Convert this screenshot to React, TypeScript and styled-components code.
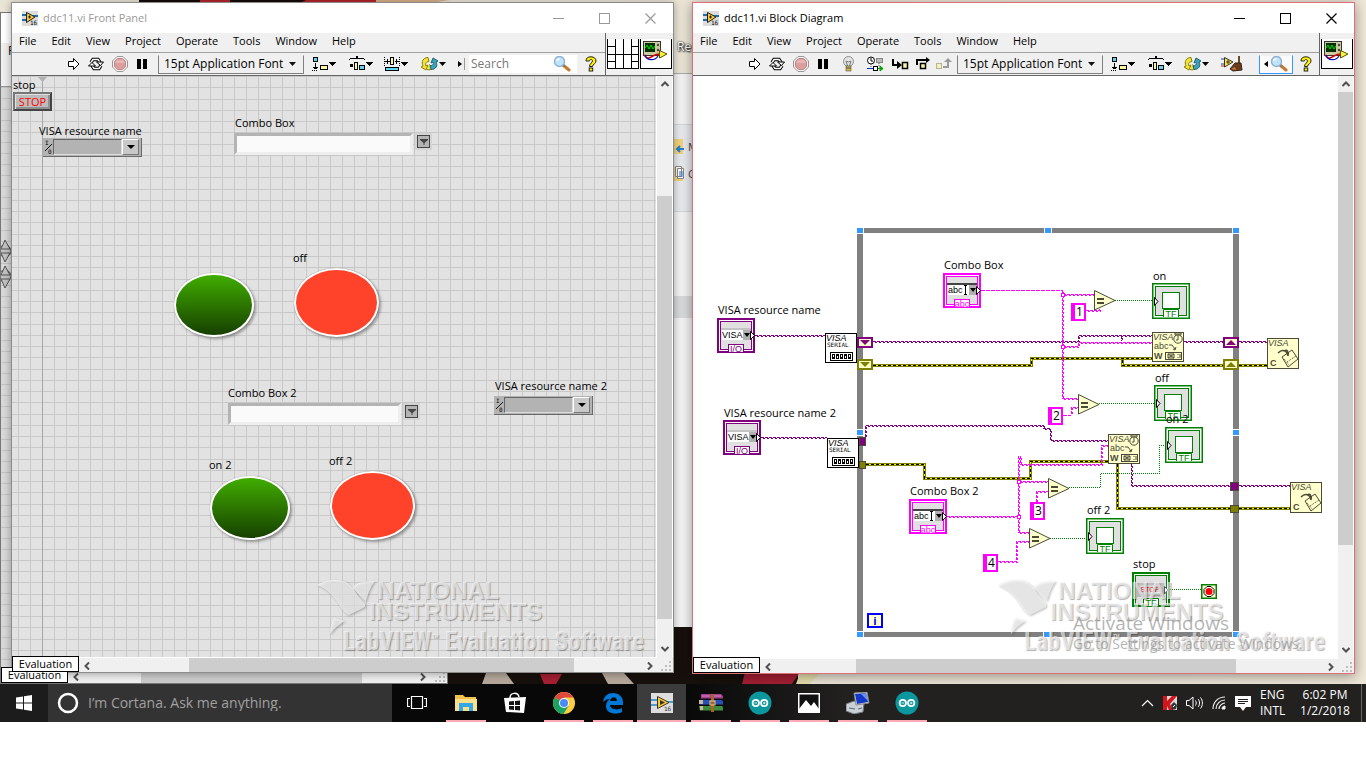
import React from "react";
import styled, { createGlobalStyle } from "styled-components";

const ui = `"Open Sans", "Noto Sans", sans-serif`;
const narrow = `"Liberation Sans Narrow", "Roboto Condensed", "DejaVu Sans Condensed", "Liberation Sans", sans-serif`;

const menus = ["File", "Edit", "View", "Project", "Operate", "Tools", "Window", "Help"];

/* ---------- toolbar icons ---------- */

const Caret = ({ x, y = 7 }: { x: number; y?: number }) => (
  <path d={`M${x} ${y}h7l-3.5 4z`} fill="#000" />
);

const RunIcon = () => (
  <svg width="14" height="14" viewBox="0 0 14 14">
    <path d="M1.500 4.500h5v-3l5.500 5.500-5.500 5.500v-3h-5z" fill="#fff" stroke="#000" />
  </svg>
);

const CycleIcon = () => (
  <svg width="16" height="14" viewBox="0 0 16 14">
    <g fill="none" stroke="#000" strokeWidth="3.4">
      <path d="M3 5.500 5 2.500h5l2 3" />
      <path d="M13 8.500 11 11.500H6l-2-3" />
    </g>
    <g fill="none" stroke="#fff" strokeWidth="1.4">
      <path d="M3 5.500 5 2.500h5l2 3" />
      <path d="M13 8.500 11 11.500H6l-2-3" />
    </g>
    <path d="M8.500 5h7l-3 3.500z" fill="#fff" stroke="#000" />
    <path d="M.5 9h7L4 5.500z" fill="#fff" stroke="#000" />
  </svg>
);

const AbortIcon = () => (
  <svg width="16" height="16" viewBox="0 0 16 16">
    <path d="M5 .5h6L15.500 5v6L11 15.500H5L.5 11V5z" fill="#f4f0f0" stroke="#999" />
    <path d="M5.500 2.500h5l3 3v5l-3 3h-5l-3-3v-5z" fill="#dd9d9d" stroke="#c08888" />
    <path d="M5 4h6l2 3H3z" fill="#e6b6b6" />
  </svg>
);

const PauseIcon = () => (
  <svg width="10" height="12" viewBox="0 0 10 12">
    <path d="M0 1h4v10H0zM6 1h4v10H6z" fill="#000" />
  </svg>
);

const AlignIcon = () => (
  <svg width="24" height="16" viewBox="0 0 24 16" shapeRendering="crispEdges">
    <rect x="1.500" y="1.500" width="4" height="4" fill="#5fd3ef" stroke="#000" />
    <path d="M3.500 7v4M1 11.500h5M2 12.500h3M0 14.500h1M2 14.500h1M4 14.500h1" stroke="#000" fill="none" />
    <rect x="8.500" y="9.500" width="7" height="4" fill="#fdf6a0" stroke="#000" />
    <Caret x={17} y={6} />
  </svg>
);

const DistributeIcon = () => (
  <svg width="24" height="16" viewBox="0 0 24 16" shapeRendering="crispEdges">
    <path d="M0 3.500 2 2.500h5L8 .5l1 2h5l2 1" fill="none" stroke="#000" />
    <rect x="1" y="8" width="3" height="3" fill="#000" />
    <rect x="5.500" y="6.500" width="3" height="7" fill="#fdf6a0" stroke="#000" />
    <rect x="10.500" y="9.500" width="5" height="4" fill="#5fd3ef" stroke="#000" />
    <Caret x={17} y={6} />
  </svg>
);

const ResizeIcon = () => (
  <svg width="24" height="16" viewBox="0 0 24 16" shapeRendering="crispEdges">
    <path d="M.5 1v9M15.500 1v9" stroke="#000" strokeDasharray="1 1" />
    <path d="M1 5.500h5M11 5.500h4M3.500 3v5M12.500 3v5" stroke="#000" />
    <rect x="6.500" y="1.500" width="3" height="7" fill="#fdf6a0" stroke="#000" />
    <rect x="1.500" y="11.500" width="13" height="3" fill="#5fd3ef" stroke="#000" />
    <Caret x={17} y={6} />
  </svg>
);

const ReorderIcon = () => (
  <svg width="26" height="16" viewBox="0 0 26 16">
    <path d="M7 1.500C2 1.500 0 6 2 10l-2 1 5 3 2-5-2 1c-1-3 0-4 3-4.500z" fill="#f1e33a" stroke="#8c7d00" />
    <path d="M6 13.500c3 1 5 0 5-3l-3-2" fill="#f1e33a" stroke="#8c7d00" />
    <path d="M10 13.500c5 0 7-4 5-7.500l2-1-5-3-2 5 2-1c1 2 0 3.500-3 4z" fill="#3aa5bd" stroke="#1c6273" />
    <Caret x={18} y={6} />
  </svg>
);

const BulbIcon = () => (
  <svg width="13" height="16" viewBox="0 0 13 16">
    <circle cx="6.500" cy="5.500" r="5" fill="#e4e4e4" stroke="#8f8f8f" />
    <path d="M4 5l1.500 5M9 5 7.500 10M4 5l2.500 1L9 5" stroke="#777" fill="none" />
    <rect x="4" y="10" width="5" height="5" fill="#d3b83d" stroke="#555" strokeWidth=".6" />
    <path d="M4 12h5" stroke="#555" />
  </svg>
);

const RetainIcon = () => (
  <svg width="17" height="16" viewBox="0 0 17 16">
    <circle cx="4" cy="4.500" r="3.500" fill="#fff" stroke="#000" />
    <path d="M4 2v3h2" fill="none" stroke="#000" />
    <rect x="9.500" y="2.500" width="6" height="4" fill="#bbb" stroke="#888" />
    <path d="M4 8v4M12 7v4" stroke="#555" strokeDasharray="1 1" />
    <path d="M0 12.500h7" stroke="#0033cc" />
    <rect x="6.500" y="10.500" width="4" height="4" fill="#fff" stroke="#000" />
    <path d="M11 12.500h5M13 10l3 2.500-3 2.500z" stroke="#00a000" fill="#00c000" />
  </svg>
);

const StepIntoIcon = () => (
  <svg width="17" height="14" viewBox="0 0 17 14">
    <path d="M1 2v6h6" fill="none" stroke="#000" strokeWidth="2" />
    <path d="M5 4l5 4-5 4z" fill="#000" />
    <rect x="10.500" y="5.500" width="5" height="6" fill="#fdf6a0" stroke="#000" strokeWidth="1.500" />
  </svg>
);

const StepOverIcon = () => (
  <svg width="15" height="14" viewBox="0 0 15 14">
    <path d="M1 8V3h10" fill="none" stroke="#000" strokeWidth="2" />
    <path d="M10 0l4 3-4 3z" fill="#000" />
    <rect x="4.500" y="6.500" width="5" height="5" fill="#fdf6a0" stroke="#000" strokeWidth="1.500" />
  </svg>
);

const StepOutIcon = () => (
  <svg width="17" height="14" viewBox="0 0 17 14">
    <rect x="1.500" y="6.500" width="5" height="5" fill="#f5f0c0" stroke="#b8b490" />
    <path d="M8 10h5V4" fill="none" stroke="#9a9a9a" strokeWidth="2" />
    <path d="M9 5l4-4 4 4z" fill="#9a9a9a" />
  </svg>
);

const CleanIcon = () => (
  <svg width="22" height="16" viewBox="0 0 22 16">
    <path d="M0 3h5M0 8h5" stroke="#1144cc" />
    <path d="M0 10h4" stroke="#cc2200" />
    <path d="M3.500 1.500 12 6l-8.500 5z" fill="#ffe23d" stroke="#333" />
    <path d="M5 6h4M7 4v4" stroke="#333" />
    <path d="M17 0h2v8h-2z" fill="#6b4a2a" />
    <path d="M14 7h6l1 7-9 1-3-2z" fill="#6b3a1d" stroke="#3b2413" />
    <path d="M10 13l4-2 1 3z" fill="#c7803a" />
  </svg>
);

const GlassIcon = () => (
  <svg width="18" height="16" viewBox="0 0 18 16">
    <path d="M10 9l6 5" stroke="#c77a2f" strokeWidth="3" strokeLinecap="round" />
    <path d="M9.500 8.500l2 2" stroke="#777" strokeWidth="2" />
    <circle cx="6.500" cy="5.500" r="5" fill="#bfe4fa" stroke="#8fb0d8" strokeWidth="1.400" />
    <path d="M3 5c0-2 2-3 4-2.500-1 1.500-2 2-4 2.500z" fill="#fff" />
  </svg>
);

const HelpIcon = () => (
  <svg width="12" height="16" viewBox="0 0 12 16">
    <path
      d="M1 5C1 2 3 .8 6 .8S11 2.500 11 5c0 3-3.500 3-3.500 5.500H4.500C4.500 7 7.500 7 7.500 5c0-2-3-2-3 0z"
      fill="#fff200"
      stroke="#222"
    />
    <rect x="4.200" y="12" width="3.500" height="3" fill="#fff200" stroke="#222" />
  </svg>
);

const ViIcon = () => (
  <svg width="16" height="15" viewBox="0 0 16 15">
    <rect width="16" height="15" fill="#dcdcdc" />
    <path d="M0 4h5M0 9h5M10 5h6" stroke="#1a6fb5" strokeWidth="2" />
    <path d="M4.500 1.500 13 6l-8.500 5.500z" fill="#fdc82f" stroke="#222" />
    <path d="M6 6h3M7.500 4.500v3" stroke="#222" />
    <MicroText x="8" y="14">16</MicroText>
  </svg>
);

const PaneIcon = () => (
  <svg width="32" height="30" viewBox="0 0 32 30">
    <rect x=".5" y="-1" width="31" height="30.500" fill="#fff" stroke="#000" />
    <rect x="3.500" y="2.500" width="17" height="14" fill="#cfcba0" stroke="#333" />
    <rect x="5" y="4" width="10" height="9" fill="#003000" />
    <path d="M5 9l2-3 2 4 2-4 2 4 2-3" fill="none" stroke="#00e000" />
    <circle cx="18" cy="6" r="1.200" fill="#444" />
    <circle cx="18" cy="11" r="1.200" fill="#444" />
    <path d="M3 16c3 0 2 4 6 3 4-1 5-4 11-4" fill="none" stroke="#e00000" strokeWidth="1.500" />
    <path d="M5 16c2 6 10 6 13 1" fill="none" stroke="#0010c0" strokeWidth="1.200" />
    <path d="M19.500 11.500 27 15l-7.500 4z" fill="#fff23d" stroke="#555500" />
  </svg>
);

const ConnectorIcon = () => (
  <svg width="32" height="30" viewBox="0 0 32 30" shapeRendering="crispEdges">
    <rect x=".5" y="-1" width="31" height="30.500" fill="#fff" stroke="#000" />
    <path d="M8.500 0v29M16.500 0v29M24.500 0v29M0 15.500h32M0 7.500h8M0 22.500h8M24 7.500h8M24 22.500h8" stroke="#000" />
  </svg>
);

/* ---------- window shell ---------- */

type Tool = { name: string; width: number; icon: React.ReactNode };

const runTools: Tool[] = [
  { name: "Run", width: 20, icon: <RunIcon /> },
  { name: "Run Continuously", width: 23, icon: <CycleIcon /> },
  { name: "Abort Execution", width: 26, icon: <AbortIcon /> },
  { name: "Pause", width: 18, icon: <PauseIcon /> },
];

const debugTools: Tool[] = [
  { name: "Highlight Execution", width: 33, icon: <BulbIcon /> },
  { name: "Retain Wire Values", width: 20, icon: <RetainIcon /> },
  { name: "Step Into", width: 30, icon: <StepIntoIcon /> },
  { name: "Step Over", width: 16, icon: <StepOverIcon /> },
  { name: "Step Out", width: 24, icon: <StepOutIcon /> },
];

const Tools = ({ items }: { items: Tool[] }) => (
  <>
    {items.map((t) => (
      <ToolButton key={t.name} $w={t.width} aria-label={t.name}>
        {t.icon}
      </ToolButton>
    ))}
  </>
);

const FontSelect = ({ gap }: { gap: number }) => (
  <SelectBox $gap={gap}>
    <FontPicker aria-label="Text settings">
      <option>15pt Application Font</option>
    </FontPicker>
    <svg width="7" height="4" viewBox="0 0 7 4">
      <path d="M0 0h7L3.500 4z" fill="#111" />
    </svg>
  </SelectBox>
);

const Chevron = ({ d }: { d: string }) => (
  <svg width="10" height="10" viewBox="0 0 10 10">
    <path d={d} fill="none" stroke="#505050" strokeWidth="2" />
  </svg>
);

const Scroll = ({ vertical, parts }: { vertical?: boolean; parts: [number, number, number] }) => (
  <ScrollBar $v={vertical}>
    <ScrollButton aria-label={vertical ? "Scroll up" : "Scroll left"}>
      <Chevron d={vertical ? "M1.500 7 5 3.500 8.500 7" : "M7 1.500 3.500 5 7 8.500"} />
    </ScrollButton>
    <Grow $n={parts[0]} />
    <Thumb $n={parts[1]} />
    <Grow $n={parts[2]} />
    <ScrollButton aria-label={vertical ? "Scroll down" : "Scroll right"}>
      <Chevron d={vertical ? "M1.500 3 5 6.500 8.500 3" : "M3 1.500 6.500 5 3 8.500"} />
    </ScrollButton>
  </ScrollBar>
);

const Grip = () => (
  <svg width="10" height="10" viewBox="0 0 10 10">
    <path d="M8 0h2v2H8zM8 4h2v2H8zM8 8h2v2H8zM4 4h2v2H4zM4 8h2v2H4zM0 8h2v2H0z" fill="#bdbdbd" />
  </svg>
);

type ShellProps = {
  title: string;
  active?: boolean;
  tools: React.ReactNode;
  pane: React.ReactNode;
  v: [number, number, number];
  h: [number, number, number];
  children: React.ReactNode;
};

const Shell = ({ title, active, tools, pane, v, h, children }: ShellProps) => (
  <>
    <TitleBar $active={active}>
      <ViIcon />
      <h1>{title}</h1>
      <WindowButton aria-label="Minimize">
        <svg width="11" height="11" viewBox="0 0 11 11">
          <path d="M0 5.500h11" stroke="currentColor" />
        </svg>
      </WindowButton>
      <WindowButton aria-label="Maximize">
        <svg width="11" height="11" viewBox="0 0 11 11">
          <rect x=".5" y=".5" width="10" height="10" fill="none" stroke="currentColor" />
        </svg>
      </WindowButton>
      <WindowButton aria-label="Close">
        <svg width="11" height="11" viewBox="0 0 11 11">
          <path d="M.5.5l10 10M10.500.5l-10 10" stroke="currentColor" strokeWidth="1.200" />
        </svg>
      </WindowButton>
    </TitleBar>
    <Header>
      <Bars>
        <MenuBar>
          {menus.map((m) => (
            <MenuItem key={m}>{m}</MenuItem>
          ))}
        </MenuBar>
        <Toolbar>{tools}</Toolbar>
      </Bars>
      <Pane>{pane}</Pane>
    </Header>
    <Middle>
      {children}
      <Scroll vertical parts={v} />
    </Middle>
    <Footer>
      <Tab>Evaluation</Tab>
      <Scroll parts={h} />
      <Corner>
        <Grip />
      </Corner>
    </Footer>
  </>
);

const NiMark = ({ x }: { x: number }) => (
  <Watermark $x={x}>
    <svg width="60" height="56" viewBox="0 0 60 56">
      <path
        d="M0 5c6-4 14-6 22-5 7 1 12 5 15 10 3 5 6 9 11 14v3l-16 8c-6-3-9-9-13-15C14 13 8 8 0 5zM35 8c4-5 9-7 23-7-4 5-6 10-9 20-5-4-8-8-14-13zM17 38l11 3c-4 2-9 6-15 13 0-6 1-11 4-16z"
        fill="currentColor"
      />
    </svg>
    <MarkLines>
      <MarkText $indent>NATIONAL</MarkText>
      <MarkText>INSTRUMENTS</MarkText>
    </MarkLines>
    <MarkProduct>
      LabVIEW<small>™</small> Evaluation Software
    </MarkProduct>
  </Watermark>
);

/* ---------- front panel ---------- */

type FieldProps = { id: string; label: string; x: number; y: number; lx: number; ly: number };

const Visa = ({ id, label, x, y, lx, ly }: FieldProps) => (
  <>
    <At $x={lx} $y={ly}>
      <label htmlFor={id}>{label}</label>
    </At>
    <At $x={x} $y={y}>
      <VisaBox>
        <svg width="9" height="16" viewBox="0 0 9 16">
          <MicroText x="1" y="6">I</MicroText>
          <path d="M1 12l7-7" stroke="#111" />
          <MicroText x="4" y="15">0</MicroText>
        </svg>
        <VisaSelect id={id} />
        <VisaArrow>
          <svg width="8" height="4" viewBox="0 0 8 4">
            <path d="M0 0h8L4 4z" />
          </svg>
        </VisaArrow>
      </VisaBox>
    </At>
  </>
);

const Combo = ({ id, label, x, y, lx, ly, width }: FieldProps & { width: number }) => (
  <>
    <At $x={lx} $y={ly}>
      <label htmlFor={id}>{label}</label>
    </At>
    <At $x={x} $y={y}>
      <ComboRow>
        <ComboInput id={id} $w={width} />
        <ComboButton aria-label={`${label} list`}>
          <svg width="8" height="6" viewBox="0 0 8 6">
            <path d="M0 0h8v1L4.500 4v2h-1V4L0 1z" fill="#444" />
          </svg>
        </ComboButton>
      </ComboRow>
    </At>
  </>
);

const FrontPanel = () => (
  <FrontWindow>
    <Shell
      title="ddc11.vi Front Panel"
      tools={
        <>
          <Tools items={runTools} />
          <FontSelect gap={7} />
          <Tools
            items={[
              { name: "Align Objects", width: 40, icon: <AlignIcon /> },
              { name: "Distribute Objects", width: 34, icon: <DistributeIcon /> },
              { name: "Resize Objects", width: 36, icon: <ResizeIcon /> },
              { name: "Reorder", width: 40, icon: <ReorderIcon /> },
            ]}
          />
          <Expander>
            <svg width="8" height="12" viewBox="0 0 8 12">
              <path d="M0 3v6l4-3z" />
              <path d="M6.500 0v12" stroke="#999" />
            </svg>
          </Expander>
          <SearchBox>
            <input aria-label="Search" placeholder="Search" />
            <GlassIcon />
          </SearchBox>
          <Tools items={[{ name: "Context Help", width: 28, icon: <HelpIcon /> }]} />
        </>
      }
      pane={
        <>
          <ConnectorIcon />
          <PaneIcon />
        </>
      }
      v={[104, 421, 22]}
      h={[94, 379, 67]}
    >
      <GridCanvas>
        <Layer $x={12} $y={76}>
          <At $x={38} $y={77}>
            <svg width="9" height="580" viewBox="0 0 9 580">
              <path d="M4.500 4v576" stroke="#a8a8a8" />
              <path d="M0 0h9L4.500 5z" fill="#b0b0b0" />
            </svg>
          </At>
          <At $x={13} $y={77}>stop</At>
          <At $x={13} $y={92}>
            <StopButton>STOP</StopButton>
          </At>
          <Visa id="visa1" label="VISA resource name" lx={39} ly={123} x={43} y={138} />
          <Combo id="combo1" label="Combo Box" lx={235} ly={115} x={234} y={133} width={179} />
          <At $x={174} $y={273}>
            <RoundButton $on aria-label="on" />
          </At>
          <At $x={293} $y={250}>off</At>
          <At $x={294} $y={268}>
            <RoundButton aria-label="off" />
          </At>
          <Combo id="combo2" label="Combo Box 2" lx={228} ly={385} x={228} y={403} width={173} />
          <Visa id="visa2" label="VISA resource name 2" lx={495} ly={378} x={494} y={396} />
          <At $x={209} $y={457}>on 2</At>
          <At $x={210} $y={476}>
            <RoundButton $on aria-label="on 2" />
          </At>
          <At $x={329} $y={453}>off 2</At>
          <At $x={330} $y={471}>
            <RoundButton aria-label="off 2" />
          </At>
          <NiMark x={317} />
        </Layer>
      </GridCanvas>
    </Shell>
  </FrontWindow>
);

/* ---------- block diagram ---------- */

const purple = "#800080";
const pink = "#ff00ff";
const green = "#008000";
const olive = "#808000";
const cream = "#ffffcc";
const ink = "#4a4a36";

// resource and string wires are drawn as two interleaved dash rows
const Zigzag = ({ d, color }: { d: string; color: string }) => (
  <>
    <path d={d} stroke={color} strokeDasharray="3 1" />
    <path d={d} stroke={color} strokeDasharray="2 2" strokeDashoffset="3" transform="translate(1 1)" />
  </>
);

const ErrorWire = ({ d }: { d: string }) => (
  <>
    <path d={d} stroke={olive} strokeWidth="3" />
    <path d={d} stroke="#f2f200" />
    <path d={d} stroke="#000" strokeDasharray="3 2" />
  </>
);

const resourceWires = [
  "M755 335.500H825",
  "M873 341.500H1078.500V335.500H1152",
  "M1121.500 336V341",
  "M1184 341.500H1223",
  "M1239 341.500H1267",
  "M761 437.500H827",
  "M865.500 437V425.500H1043.500V428.500H1050.500V440.500H1108",
  "M1131.500 464V485.500H1230",
  "M1239 485.500H1290",
];

const stringWires = [
  "M1062.500 290V398.500H1078",
  "M1063 294.500H1094",
  "M1086 310.500H1099.500V307",
  "M1063 346.500H1078.500V342.500H1152",
  "M1071.500 414V407.500H1078",
  "M947 516.500H1019",
  "M1018.500 456V532.500H1029",
  "M1020.500 456V464.500H1101.500V445.500H1108",
  "M1019 481.500H1048",
  "M1036.500 502V491.500H1048",
  "M998 561.500H1016.500V541.500H1029",
];

const errorWires = [
  "M873 365.500H1031.500V358.500H1152",
  "M1122.500 360V365.500H1223",
  "M1239 365.500H1267",
  "M866 464.500H924.500V478.500H1030.500V461.500H1108",
  "M1117.500 464V508.500H1230",
  "M1239 508.500H1290",
];

const boolWires = [
  "M1115 300.500H1152",
  "M1099 403.500H1154",
  "M1069 487.500H1100.500V473.500H1159.500V445.500H1165",
  "M1050 538.500H1086",
  "M1170 589.500H1201",
];

const handles = [
  [857, 228], [1045, 228], [1233, 228],
  [857, 430], [1233, 430],
  [857, 632], [1044, 632], [1233, 632],
];

const Wires = () => (
  <svg width="700" height="600" viewBox="693 76 700 600" fill="none" shapeRendering="crispEdges">
    <path d="M857 230.500H1239M857 634.500H1239" stroke="#808080" strokeWidth="5" />
    <path d="M860 228V637M1236 228V637" stroke="#808080" strokeWidth="6" />
    {handles.map(([x, y]) => (
      <g key={`${x}-${y}`}>
        <rect x={x - 1} y={y - 1} width="8" height="7" fill="#fff" />
        <rect x={x} y={y} width="6" height="5" fill="#3399ff" />
      </g>
    ))}
    {errorWires.map((d) => <ErrorWire key={d} d={d} />)}
    {resourceWires.map((d) => <Zigzag key={d} d={d} color={purple} />)}
    {stringWires.map((d) => <Zigzag key={d} d={d} color={pink} />)}
    <path d="M981 290.500H1063M1063 415.500H1071" stroke={pink} strokeDasharray="4 1" />
    {boolWires.map((d) => <path key={d} d={d} stroke={green} strokeDasharray="1 1" />)}
    {[[1063, 295], [1063, 347], [1019, 482], [1019, 517]].map(([x, y]) => (
      <circle key={`${x}-${y}`} cx={x} cy={y} r="2" stroke={pink} fill="#fff" />
    ))}
    <rect x="859.500" y="437.500" width="6" height="8" fill={purple} stroke={ink} />
    <rect x="859.500" y="461.500" width="6" height="7" fill={olive} stroke={ink} />
    <rect x="1230.500" y="482.500" width="8" height="8" fill={purple} stroke={ink} />
    <rect x="1230.500" y="505.500" width="8" height="7" fill={olive} stroke={ink} />
  </svg>
);

const ShiftRegister = ({ color, up }: { color: string; up?: boolean }) => (
  <svg width="16" height="11" viewBox="0 0 16 11">
    <rect x="1" y="1" width="14" height="9" fill={cream} stroke={color} strokeWidth="2" />
    <path d={up ? "M3 8h10L8 3z" : "M3 3h10L8 8z"} fill={color} />
  </svg>
);

const ControlTerminal = ({ kind }: { kind: "VISA" | "abc" }) => {
  const color = kind === "VISA" ? purple : pink;
  return (
    <svg width="38" height="35" viewBox="0 0 38 35">
      <rect x="1" y="1" width="36" height="33" fill="#fff" stroke={color} strokeWidth="2" />
      <rect x="3.500" y="3.500" width="31" height="28" fill="#e0e0e0" stroke={color} />
      <rect x="4" y="10" width="30" height="2" fill={kind === "VISA" ? "#c4c4c4" : "#444"} />
      <rect x="5" y="12" width="28" height="10" fill="#fff" />
      <rect x="26" y="12" width="8" height="10" fill="#b0b0b0" />
      <path d="M27 15h6l-3 4z" fill="#000" />
      <path d="M33.500 13.500 37.500 17.500l-4 4z" fill="#fff" stroke="#000" />
      <TinyText x="5" y="20">{kind}</TinyText>
      {kind === "abc" && <path d="M21 12.500h3M22.500 13v8M21 21.500h3" stroke="#000" />}
      <rect x="11.500" y="26.500" width="15" height="8" fill="#fff" stroke={color} />
      <TinyText x="19" y="34" textAnchor="middle" fill={color}>
        {kind === "VISA" ? "I/O" : "abc"}
      </TinyText>
    </svg>
  );
};

const BoolTerminal = () => (
  <svg width="38" height="36" viewBox="0 0 38 36">
    <rect x=".75" y=".75" width="36.500" height="34.500" fill="#fff" stroke={green} strokeWidth="1.500" />
    <rect x="3.500" y="3.500" width="31" height="29" fill="#e0e0e0" stroke={green} />
    <rect x="10.500" y="9.500" width="17" height="16" fill="#fff" stroke={green} />
    <path d="M2.500 14.500 6 18.500l-3.500 4z" fill="#fff" stroke="#000" />
    <path d="M11.500 34v-7.500h15V34" fill="#fff" stroke={green} />
    <TinyText x="19" y="34" textAnchor="middle" fill={green}>TF</TinyText>
  </svg>
);

const StopTerminal = () => (
  <svg width="38" height="35" viewBox="0 0 38 35">
    <rect x="1" y="1" width="36" height="33" fill="#fff" stroke={green} strokeWidth="2" />
    <rect x="3.500" y="3.500" width="31" height="30" fill="#e0e0e0" stroke={green} />
    <rect x="5" y="11" width="27" height="14" fill="#bdbdbd" />
    <rect x="7" y="13" width="23" height="9" fill="#d4d4d4" />
    <StopText x="18" y="20" textAnchor="middle">STOP</StopText>
    <path d="M32.500 14.500 36 18l-3.500 4z" fill="#fff" stroke="#555" />
    <path d="M11.500 34v-7.500h15V34" fill="#fff" stroke={green} />
    <TinyText x="19" y="34" textAnchor="middle" fill={green}>TF</TinyText>
  </svg>
);

const StopCondition = () => (
  <svg width="16" height="15" viewBox="0 0 16 15">
    <rect x=".75" y=".75" width="14.500" height="13.500" fill={cream} stroke={green} strokeWidth="1.500" />
    <path d="M6 2.500h4l3 3v4l-3 3H6l-3-3v-4z" fill="#fff" stroke="#000" />
    <circle cx="8" cy="7.500" r="3.500" fill="#f00" />
  </svg>
);

const EqualNode = () => (
  <svg width="22" height="21" viewBox="0 0 22 21">
    <path d="M.5.5 21 10.500.5 20z" fill={cream} stroke={ink} />
    <path d="M3 9h7M3 13h7" stroke={ink} strokeWidth="2" />
  </svg>
);

const SerialNode = () => (
  <svg width="32" height="30" viewBox="0 0 32 30">
    <rect x=".5" y=".5" width="31" height="29" fill="#fff" stroke="#000" />
    <SlantText x="1" y="8">VISA</SlantText>
    <MicroText x="2" y="14">SERIAL</MicroText>
    <rect x="5.500" y="19.500" width="22" height="8" fill="#fff" stroke="#000" />
    <path d="M7 21h3v5H7zM11 21h3v5h-3zM15 21h3v5h-3zM19 21h3v5h-3zM23 21h3v5h-3z" fill="#000" />
    <path d="M8 22h1v2H8zM12 23h1v2h-1zM16 22h1v2h-1zM20 23h1v2h-1zM24 22h1v2h-1z" fill="#fff" />
  </svg>
);

const WriteNode = () => (
  <svg width="32" height="30" viewBox="0 0 32 30">
    <rect x=".5" y=".5" width="31" height="29" fill={cream} stroke={ink} />
    <SlantText x="1" y="8" fill={ink}>VISA</SlantText>
    <TinyText x="2" y="17" fill={ink}>abc</TinyText>
    <path d="M17 13h3l3 4M21 17l2 1 1-3" fill="none" stroke={ink} />
    <circle cx="26" cy="7" r="4.200" fill={cream} stroke={ink} />
    <path d="M26 4v4h-2M23 1h6v2h-6z" fill="none" stroke={ink} />
    <TinyText x="2" y="27" fontWeight="bold" fill={ink}>W</TinyText>
    <rect x="13.500" y="20.500" width="16" height="7" fill={cream} stroke={ink} />
    <path d="M16 22h6v4h-6zM16 22l6 4M22 22l-6 4M26 22v1M26 25v1M28 22v4" fill="none" stroke={ink} />
  </svg>
);

const CloseNode = () => (
  <svg width="32" height="31" viewBox="0 0 32 31">
    <rect x=".5" y=".5" width="31" height="30" fill={cream} stroke={ink} />
    <SlantText x="1" y="8" fill={ink}>VISA</SlantText>
    <TinyText x="3" y="28" fontWeight="bold" fill={ink}>C</TinyText>
    <path d="M15 19l10-7 6 9-10 8z" fill={cream} stroke={ink} />
    <path d="M11 15c4-4 9-3 10 3M17 13c3-2 5 0 4 5" fill="none" stroke={ink} strokeWidth="1.500" />
    <path d="M17 21l5 6M20 24l9-6" stroke={ink} strokeDasharray="1 1" />
  </svg>
);

const nodes: { x: number; y: number; node: React.ReactNode }[] = [
  { x: 943, y: 273, node: <ControlTerminal kind="abc" /> },
  { x: 717, y: 318, node: <ControlTerminal kind="VISA" /> },
  { x: 723, y: 420, node: <ControlTerminal kind="VISA" /> },
  { x: 909, y: 499, node: <ControlTerminal kind="abc" /> },
  { x: 825, y: 333, node: <SerialNode /> },
  { x: 827, y: 438, node: <SerialNode /> },
  { x: 857, y: 337, node: <ShiftRegister color={purple} /> },
  { x: 857, y: 359, node: <ShiftRegister color={olive} /> },
  { x: 1223, y: 337, node: <ShiftRegister color={purple} up /> },
  { x: 1223, y: 359, node: <ShiftRegister color={olive} up /> },
  { x: 1094, y: 290, node: <EqualNode /> },
  { x: 1078, y: 394, node: <EqualNode /> },
  { x: 1048, y: 478, node: <EqualNode /> },
  { x: 1029, y: 528, node: <EqualNode /> },
  { x: 1152, y: 332, node: <WriteNode /> },
  { x: 1108, y: 434, node: <WriteNode /> },
  { x: 1267, y: 338, node: <CloseNode /> },
  { x: 1290, y: 482, node: <CloseNode /> },
  { x: 1152, y: 283, node: <BoolTerminal /> },
  { x: 1154, y: 385, node: <BoolTerminal /> },
  { x: 1165, y: 427, node: <BoolTerminal /> },
  { x: 1086, y: 518, node: <BoolTerminal /> },
  { x: 1132, y: 572, node: <StopTerminal /> },
  { x: 1201, y: 584, node: <StopCondition /> },
  { x: 1071, y: 303, node: "1" },
  { x: 1048, y: 407, node: "2" },
  { x: 1030, y: 502, node: "3" },
  { x: 983, y: 554, node: "4" },
];

const captions = [
  { x: 944, y: 257, text: "Combo Box" },
  { x: 718, y: 302, text: "VISA resource name" },
  { x: 724, y: 405, text: "VISA resource name 2" },
  { x: 910, y: 483, text: "Combo Box 2" },
  { x: 1153, y: 268, text: "on" },
  { x: 1155, y: 370, text: "off" },
  { x: 1166, y: 411, text: "on 2" },
  { x: 1087, y: 502, text: "off 2" },
  { x: 1133, y: 556, text: "stop" },
];

const BlockDiagram = () => (
  <BlockWindow>
    <Shell
      title="ddc11.vi Block Diagram"
      active
      tools={
        <>
          <Tools items={runTools} />
          <Tools items={debugTools} />
          <FontSelect gap={2} />
          <Tools
            items={[
              { name: "Align Objects", width: 40, icon: <AlignIcon /> },
              { name: "Distribute Objects", width: 34, icon: <DistributeIcon /> },
              { name: "Reorder", width: 40, icon: <ReorderIcon /> },
              { name: "Clean Up Diagram", width: 30, icon: <CleanIcon /> },
            ]}
          />
          <SearchButton aria-label="Search">
            <svg width="4" height="6" viewBox="0 0 4 6">
              <path d="M4 0v6L0 3z" />
            </svg>
            <GlassIcon />
          </SearchButton>
          <Tools items={[{ name: "Context Help", width: 26, icon: <HelpIcon /> }]} />
        </>
      }
      pane={<PaneIcon />}
      v={[0, 452, 97]}
      h={[80, 378, 86]}
    >
      <Canvas>
        <Layer $x={693} $y={76}>
          <At $x={693} $y={76}>
            <Wires />
          </At>
          {nodes.map(({ x, y, node }) => (
            <At key={`${x}-${y}`} $x={x} $y={y}>
              {typeof node === "string" ? <Constant>{node}</Constant> : node}
            </At>
          ))}
          <At $x={867} $y={613}>
            <Iteration>i</Iteration>
          </At>
          {captions.map((c) => (
            <At key={c.text} $x={c.x} $y={c.y}>{c.text}</At>
          ))}
          <NiMark x={998} />
          <At $x={1073} $y={611}>
            <Activate>
              <strong>Activate Windows</strong>
              <span>Go to Settings to activate Windows.</span>
            </Activate>
          </At>
        </Layer>
      </Canvas>
    </Shell>
  </BlockWindow>
);

/* ---------- desktop and taskbar ---------- */

const Wallpaper = () => (
  <Backdrop viewBox="0 0 1366 684" preserveAspectRatio="none">
    <defs>
      <linearGradient id="paper" x1="0" x2="1">
        <stop offset="0" stopColor="#e9e4d6" />
        <stop offset="1" stopColor="#efe7d8" />
      </linearGradient>
    </defs>
    <rect width="1366" height="684" fill="url(#paper)" />
    <rect x="139" width="250" height="300" fill="#140b0c" />
    <path d="M306 0h70l14 3h-90zM200 0h30v3h-30z" fill="#b3252c" />
    <path d="M376 0h74l-20 3h-54z" fill="#d8b088" />
    <path d="M440 600h358v84H440z" fill="#17100c" />
    <path d="M486 673h20l8 11h-32zM602 673h22l10 11h-26z" fill="#b5a79a" />
    <path d="M540 674h22l-6 10h-12zM745 672h55l-8 12h-50z" fill="#a41f33" />
    <path d="M800 673h20l-10 11h-14z" fill="#e8e0b0" />
  </Backdrop>
);

const ExplorerBehind = () => (
  <Explorer>
    <Ribbon>
      <div>
        <svg width="11" height="15" viewBox="0 0 11 15">
          <path d="M0 0h9v15H0z" fill="#f3d57d" />
          <path d="M10 10H4M6 7l-3 3 3 3" fill="none" stroke="#2581cc" strokeWidth="2" />
        </svg>
        M
      </div>
      <div>
        <svg width="11" height="15" viewBox="0 0 11 15">
          <path d="M0 1h9v14H0z" fill="#f3d57d" />
          <path d="M1.500.5h6v10h-6zM3.500 2.500h6v10h-6z" fill="#fff" stroke="#888" />
          <path d="M5 6h4M5 8h4M5 10h4" stroke="#3a78c8" />
        </svg>
        C
      </div>
    </Ribbon>
    <ExplorerRow />
  </Explorer>
);

const BackVi = () => (
  <BackWindow>
    <BackTitle />
    <BackMenu>F</BackMenu>
    <BackCanvas>
      <svg width="11" height="54" viewBox="0 0 11 54">
        <g fill="#c4c4c4" stroke="#555">
          <circle cx="4" cy="14" r="6" />
          <circle cx="4" cy="39" r="6" />
          <path d="M0 12l4-9 5 9zM0 16l4 9 5-9zM0 38l4-9 5 9zM0 42l4 9 5-9z" />
        </g>
      </svg>
    </BackCanvas>
    <Footer>
      <Tab>Evaluation</Tab>
      <Scroll parts={[57, 219, 54]} />
      <Corner>
        <Grip />
      </Corner>
    </Footer>
  </BackWindow>
);

const Arduino = () => (
  <svg width="24" height="24" viewBox="0 0 24 24">
    <circle cx="12" cy="12" r="11.500" fill="#0b979d" />
    <g fill="none" stroke="#fff" strokeWidth="1.700">
      <circle cx="7.800" cy="12" r="3.200" />
      <circle cx="16.200" cy="12" r="3.200" />
    </g>
    <path d="M6.500 12h2.500M15 12h2.500M16.200 10.800v2.400" stroke="#fff" strokeWidth=".8" />
  </svg>
);

const LabviewIcon = () => (
  <svg width="22" height="20" viewBox="0 0 22 20">
    <rect width="22" height="20" fill="#dedede" />
    <path d="M0 7h6M0 12h6M15 9h7" stroke="#4d9fd0" strokeWidth="2" />
    <path d="M6.500 3.500 18 9.500l-11.500 6z" fill="#fdc82f" stroke="#333" />
    <path d="M9 7l5 2.500L9 12z" fill="#333" />
    <MicroText x="13" y="18" fill="#333">16</MicroText>
  </svg>
);

const apps: { name: string; open?: boolean; active?: boolean; icon: React.ReactNode }[] = [
  {
    name: "Task View",
    icon: (
      <svg width="20" height="14" viewBox="0 0 20 14" fill="none" stroke="#fff">
        <path d="M4.500.5h11v12h-11zM3 2.500H.5v8H3M17 2.500h2.500v8H17" strokeWidth="1.200" />
      </svg>
    ),
  },
  {
    name: "File Explorer",
    open: true,
    icon: (
      <svg width="22" height="18" viewBox="0 0 22 18">
        <path d="M0 1h8l2 2h11v14H0z" fill="#f0c24b" />
        <path d="M0 5h22v12H0z" fill="#fbe08c" />
        <path d="M4 17V9h14v8h-4v-4H8v4z" fill="#35a7e8" />
      </svg>
    ),
  },
  {
    name: "Store",
    icon: (
      <svg width="22" height="22" viewBox="0 0 22 22">
        <path d="M6 6c0-6 8-6 9-1" fill="none" stroke="#fff" strokeWidth="1.500" />
        <path d="M0 6l22-1-2 16-18-1z" fill="#fff" />
        <path d="M5 9.500l5-.5v4H5zM11 9l5-.5V13h-5zM5 14h5v4l-5-.5zM11 14h5v4.500l-5-.5z" fill="#111" />
      </svg>
    ),
  },
  {
    name: "Chrome",
    open: true,
    icon: (
      <svg width="22" height="22" viewBox="0 0 22 22">
        <circle cx="11" cy="11" r="11" fill="#ffcd40" />
        <path d="M11 11 1.500 5.500A11 11 0 0 1 20.500 5.500H11z" fill="#dd4b3e" />
        <path d="M11 11 1.500 5.500A11 11 0 0 0 10.500 22l5-8z" fill="#1aa260" />
        <circle cx="11" cy="11" r="5" fill="#fff" />
        <circle cx="11" cy="11" r="4" fill="#4a8af4" />
      </svg>
    ),
  },
  {
    name: "Edge",
    open: true,
    icon: (
      <svg width="22" height="22" viewBox="0 0 22 22">
        <path
          d="M1 10C2 4 6 1 11 1c6 0 10 4 10 9v3H8c0 4 7 6 12 3v4c-6 3-16 2-16-6 0-3 1-5 4-7-3 0-5 1-7 3zm7-1h7c0-5-6-5-7 0z"
          fill="#0078d7"
        />
      </svg>
    ),
  },
  { name: "LabVIEW", open: true, active: true, icon: <LabviewIcon /> },
  {
    name: "WinRAR",
    open: true,
    icon: (
      <svg width="24" height="18" viewBox="0 0 24 18">
        <path d="M2 0h20l2 2v3H2z" fill="#a03f8e" />
        <path d="M0 6h22l2 1v4H1z" fill="#2a4fb8" />
        <path d="M0 12h23l1 1v4H1z" fill="#3c8d3c" />
        <path d="M3 2h8M15 2h7" stroke="#d98ac8" />
        <path d="M0 5h24M0 11h24M0 17h24" stroke="#111" />
        <path d="M0 6h4v4H0zM1 12h3v4H1z" fill="#c9b9a0" />
        <path d="M12 0h3v18h-3z" fill="#a8632a" />
        <rect x="11" y="7" width="5" height="4" fill="none" stroke="#f0d070" />
      </svg>
    ),
  },
  { name: "Arduino", open: true, icon: <Arduino /> },
  {
    name: "Photos",
    open: true,
    icon: (
      <svg width="22" height="20" viewBox="0 0 22 20">
        <rect x=".75" y=".75" width="20.500" height="18.500" fill="#111" stroke="#fff" strokeWidth="1.500" />
        <path d="M1 16l7-9 5 6 3-4 5 7v3H1z" fill="#fff" />
      </svg>
    ),
  },
  {
    name: "Device Manager",
    open: true,
    icon: (
      <svg width="24" height="22" viewBox="0 0 24 22">
        <path d="M0 12l8-3 10 3-1 8-9 2-8-3z" fill="#c9d0d6" stroke="#6c757c" />
        <path d="M8 1l13-1 2 11-13 2z" fill="#dcdcdc" stroke="#888" />
        <path d="M9 2l11-1 2 9-11 2z" fill="#1238c8" />
        <path d="M15 2l5-1 2 8z" fill="#6f8fee" />
        <path d="M3 16l6 1M12 17l4-1" stroke="#5c666e" />
      </svg>
    ),
  },
  { name: "Arduino IDE", open: true, icon: <Arduino /> },
];

const Taskbar = () => (
  <TaskRow>
    <StartButton aria-label="Start">
      <svg width="16" height="16" viewBox="0 0 16 16" fill="#fff">
        <path d="M0 2.500 7 1.500v6H0zM8 1.300 16 0v7.500H8zM0 8.500h7v6L0 13.500zM8 8.500h8V16l-8-1.200z" />
      </svg>
    </StartButton>
    <Cortana>
      <svg width="22" height="22" viewBox="0 0 22 22">
        <circle cx="11" cy="11" r="9" fill="none" stroke="#fff" strokeWidth="2.500" />
      </svg>
      <input aria-label="Ask Cortana" placeholder="I’m Cortana. Ask me anything." />
    </Cortana>
    {apps.map((a) => (
      <AppButton key={a.name} aria-label={a.name} $open={a.open} $active={a.active}>
        {a.icon}
      </AppButton>
    ))}
    <Tray>
      <svg width="13" height="8" viewBox="0 0 13 8">
        <path d="M1 7l5.500-5.500L12 7" fill="none" stroke="#fff" strokeWidth="1.200" />
      </svg>
      <svg width="14" height="14" viewBox="0 0 14 14">
        <rect width="14" height="14" fill="#d8d8d8" />
        <path d="M0 0h4v5l5-5h5L7 8l3 6H6L4 10v4H0z" fill="#d3161c" />
        <path d="M8 9l3-3 3 3-1 4-4 1z" fill="#333" />
        <path d="M10 11l2-2" stroke="#fff" />
      </svg>
      <svg width="17" height="14" viewBox="0 0 17 14" fill="none" stroke="#fff">
        <path d="M.5 4.500H3l4-3.500v12L3 9.500H.500zM9.500 4.500c1 1.500 1 3.500 0 5M12 3c2 2 2 6 0 8M14.500 1.500c2.500 3 2.500 8 0 11" />
      </svg>
      <svg width="14" height="14" viewBox="0 0 14 14" fill="none" stroke="#eee">
        <path d="M1 13C1 6 6 1 13 1M4 13c0-5 4-9 9-9M7 13c0-3 3-6 6-6" strokeWidth="1.200" />
        <path d="M10 13c0-2 1-3 3-3v3z" fill="#fff" />
      </svg>
      <svg width="16" height="15" viewBox="0 0 16 15">
        <path d="M0 0h16v11H11l-3 4-3-4H0z" fill="#fff" />
        <path d="M3 3.500h10M3 5.500h10M3 7.500h7" stroke="#222" />
      </svg>
      <TrayText>
        <span>ENG</span>
        <span>INTL</span>
      </TrayText>
      <TrayText $wide>
        <span>6:02 PM</span>
        <span>1/2/2018</span>
      </TrayText>
    </Tray>
    <ShowDesktop aria-label="Show desktop" />
  </TaskRow>
);

export default function App() {
  return (
    <Screen>
      <GlobalStyle />
      <Desktop>
        <Wallpaper />
        <ShortcutLabel>Re</ShortcutLabel>
        <ExplorerBehind />
        <BackVi />
        <FrontPanel />
        <BlockDiagram />
      </Desktop>
      <Taskbar />
    </Screen>
  );
}

const GlobalStyle = createGlobalStyle`
  * { box-sizing: border-box; }
  body { margin: 0; background: #fff; font: 12px/16px ${ui}; color: #000; }
  button, input, select { font: inherit; color: inherit; margin: 0; padding: 0; border: 0; background: none; }
  button { display: flex; align-items: center; justify-content: center; }
  input, select { min-width: 0; outline: 0; }
  svg { display: block; flex: none; }
`;

const Screen = styled.div`
  display: flex;
  flex-direction: column;
  height: 100vh;
  padding-bottom: 46px;
  overflow: hidden;
`;
const Desktop = styled.main`
  position: relative;
  flex: 1;
  min-height: 0;
  overflow: hidden;
`;
const Backdrop = styled.svg`
  width: 100%;
  height: 100%;
`;
const ShortcutLabel = styled.span`
  position: absolute;
  left: 677px;
  top: 39px;
  color: #fff;
  text-shadow: 0 0 2px #000, 1px 1px 2px #000;
`;

const WindowBase = styled.section`
  position: absolute;
  display: flex;
  flex-direction: column;
  background: #fff;
`;
const FrontWindow = styled(WindowBase)`
  top: 2px;
  bottom: 11px;
  left: 11px;
  width: calc(50% - 20px);
  border: 1px solid #8c8c8c;
  box-shadow: 0 1px 8px rgba(0, 0, 0, 0.35);
`;
const BlockWindow = styled(WindowBase)`
  top: 2px;
  bottom: 10px;
  left: calc(50% + 9px);
  right: 11px;
  border: 1px solid #dc6f78;
  box-shadow: 0 2px 12px rgba(0, 0, 0, 0.4);
`;
const BackWindow = styled(WindowBase)`
  top: 12px;
  bottom: 0;
  left: 0;
  width: 448px;
  border: 1px solid #777;
`;
const BackTitle = styled.div`
  height: 30px;
`;
const BackMenu = styled.div`
  height: 44px;
  padding: 0 7px;
  border-bottom: 1px solid #999;
  background: #f0f0f0;
`;
const BackCanvas = styled.div`
  display: flex;
  flex: 1;
  padding-top: 150px;
  background: #d9d9d9 repeating-linear-gradient(#c4c4c4 0 1px, transparent 1px 11px);
`;
const Explorer = styled.div`
  position: absolute;
  top: 73px;
  bottom: 57px;
  left: 600px;
  width: 110px;
  padding-left: 74px;
  border-top: 1px solid #aaa;
  background: #f5f5f6;
`;
const Ribbon = styled.div`
  display: flex;
  flex-direction: column;
  gap: 12px;
  height: 88px;
  margin-top: 50px;
  padding-top: 14px;
  border: 1px solid #d5d8dc;
  border-width: 1px 0;
  background: #e9ebee;
  font-size: 11px;
  color: #444;

  div {
    display: flex;
    gap: 3px;
    height: 15px;
  }
`;
const ExplorerRow = styled.div`
  height: 22px;
  margin-top: 84px;
  background: #dadbdc;
`;

const TitleBar = styled.header<{ $active?: boolean }>`
  display: flex;
  align-items: center;
  height: 30px;
  padding-left: 10px;
  color: ${(p) => (p.$active ? "#000" : "#999")};

  h1 {
    flex: 1;
    margin: 0 0 0 5px;
    font-size: 11px;
    font-weight: 400;
  }
`;
const WindowButton = styled.button`
  width: 46px;
  height: 28px;
`;
const Header = styled.div`
  display: flex;
  height: 43px;
  border-bottom: 1px solid #666;
  background: #f0f0f0;
`;
const Bars = styled.div`
  flex: 1;
  min-width: 0;
`;
const MenuBar = styled.nav`
  display: flex;
  gap: 15px;
  height: 20px;
  padding-left: 7px;
  border-bottom: 1px solid #a0a0a0;
`;
const MenuItem = styled.button`
  height: 16px;
  font-size: 11px;
`;
const Toolbar = styled.div`
  display: flex;
  align-items: center;
  height: 22px;
  padding-left: 52px;
`;
const ToolButton = styled.button<{ $w: number }>`
  flex: none;
  width: ${(p) => p.$w}px;
  height: 20px;
`;
const SelectBox = styled.div<{ $gap: number }>`
  display: flex;
  flex: none;
  align-items: center;
  width: 146px;
  height: 19px;
  margin-left: ${(p) => p.$gap}px;
  padding-right: 7px;
  border: 1px solid #808080;
  border-top-color: #f0f0f0;
`;
const FontPicker = styled.select`
  flex: 1;
  padding-left: 5px;
  appearance: none;
`;
const Expander = styled.span`
  flex: none;
  width: 15px;
  padding-left: 4px;
`;
const SearchBox = styled.div`
  display: flex;
  flex: 1;
  align-items: center;
  min-width: 0;
  height: 18px;
  padding: 0 6px 0 2px;
  background: #fff;

  input {
    flex: 1;
    width: 0;
  }
  input::placeholder {
    color: #777;
  }
`;
const SearchButton = styled.button`
  gap: 2px;
  flex: none;
  width: 34px;
  height: 19px;
  margin-left: auto;
  border: 1px solid #3399ff;
  border-top-color: #f0f0f0;
  background: #fafafa;
`;
const Pane = styled.div`
  display: flex;
  gap: 1px;
  padding: 6px 1px 0 1px;
  border-left: 1px solid #666;
`;
const Middle = styled.div`
  display: flex;
  flex: 1;
  min-height: 0;
`;
const Canvas = styled.div`
  position: relative;
  flex: 1;
  overflow: hidden;
  background: #fff;
  font-size: 11px;
`;
const GridCanvas = styled(Canvas)`
  background-color: #e2e2e2;
  background-image: linear-gradient(90deg, #c8c8c8 1px, transparent 1px),
    linear-gradient(
      #c8c8c8 1px,
      transparent 1px 12px,
      #c8c8c8 12px 13px,
      transparent 13px 23px,
      #c8c8c8 23px 24px,
      transparent 24px 34px,
      #c8c8c8 34px 35px,
      transparent 35px
    );
  background-size: 12px 12px, 12px 45px;
  background-position: 6px 0, 0 11px;
`;
const Layer = styled.div<{ $x: number; $y: number }>`
  position: absolute;
  left: ${(p) => -p.$x}px;
  top: ${(p) => -p.$y}px;
`;
const At = styled.div<{ $x: number; $y: number }>`
  position: absolute;
  left: ${(p) => p.$x}px;
  top: ${(p) => p.$y}px;
  white-space: nowrap;
`;

const ScrollBar = styled.div<{ $v?: boolean }>`
  display: flex;
  flex: ${(p) => (p.$v ? "none" : "1")};
  flex-direction: ${(p) => (p.$v ? "column" : "row")};
  ${(p) => (p.$v ? "width: 17px; border: solid #fff; border-width: 0 1px;" : "height: 15px; border-top: 1px solid #fff;")}
  background: #f0f0f0;
`;
const ScrollButton = styled.button`
  flex: none;
  min-width: 15px;
  height: 16px;
`;
const Grow = styled.div<{ $n: number }>`
  flex: ${(p) => p.$n};
`;
const Thumb = styled(Grow)`
  background: #cdcdcd;
`;
const Footer = styled.div`
  display: flex;
  flex: none;
  height: 15px;
`;
const Tab = styled.div`
  width: 67px;
  height: 16px;
  margin-top: -1px;
  border: 1px solid #000;
  background: #fff;
  font-size: 11px;
  line-height: 14px;
  text-align: center;
  z-index: 1;
`;
const Corner = styled.div`
  padding: 4px 2px 0 4px;
  background: #f0f0f0;
`;

const StopButton = styled.button`
  width: 39px;
  height: 19px;
  border: 2px solid;
  border-color: #777 #444 #444 #777;
  background: #bcbcbc;
  box-shadow: inset 1px 1px #e0e0e0, inset -2px -2px #909090;
  color: #f00;
  font-size: 11px;
`;
const VisaBox = styled.div`
  display: flex;
  align-items: center;
  width: 99px;
  height: 19px;
  padding: 1px 2px 2px 1px;
  border: solid #6a6a6a;
  border-width: 0 1px 1px 0;
  background: #b3b3b3;
`;
const VisaSelect = styled.select`
  flex: 1;
  height: 16px;
  border: 1px solid;
  border-color: #666 #ddd #ddd #666;
  background: #b3b3b3;
  appearance: none;
`;
const VisaArrow = styled.span`
  display: flex;
  align-items: center;
  justify-content: center;
  width: 17px;
  height: 16px;
  border: 1px solid;
  border-color: #fff #777 #777 #fff;
  background: #c8c8c8;
`;
const ComboRow = styled.div`
  display: flex;
  gap: 4px;
`;
const ComboInput = styled.input<{ $w: number }>`
  width: ${(p) => p.$w}px;
  height: 22px;
  border: 3px solid;
  border-color: #b4b4b4 #eee #eee #b4b4b4;
  background: #fafafa;
`;
const ComboButton = styled.button`
  width: 13px;
  height: 13px;
  margin-top: 2px;
  border: 1px solid #444;
  background: #b4b4b4;
  box-shadow: 0 0 0 2px #d4d4d4;
`;
const RoundButton = styled.button<{ $on?: boolean }>`
  width: ${(p) => (p.$on ? 80 : 85)}px;
  height: ${(p) => (p.$on ? 64 : 69)}px;
  border: 2px solid #fff;
  border-radius: 50%;
  background: ${(p) => (p.$on ? "linear-gradient(#42b000, #153c00)" : "#ff432b")};
  background-origin: border-box;
  box-shadow: 0 0 1px #777, 2px 2px 3px rgba(0, 0, 0, 0.35);
`;

const Constant = styled.div`
  width: 15px;
  height: 18px;
  border: 2px solid #f0f;
  border-left-width: 4px;
  font-size: 12px;
  line-height: 14px;
  text-align: center;
  background: #fff;
`;
const Iteration = styled.div`
  width: 16px;
  height: 15px;
  border: 2px solid #00f;
  background: #ffffcc;
  color: #00f;
  font-weight: 700;
  font-size: 11px;
  line-height: 11px;
  text-align: center;
`;
const TinyText = styled.text`
  font-family: "Liberation Sans", sans-serif;
  font-size: 9px;
`;
const StopText = styled(TinyText)`
  font-size: 7px;
  fill: #e02030;
`;
const MicroText = styled(TinyText)`
  font-family: "DejaVu Sans Mono", monospace;
  font-size: 6px;
`;
const SlantText = styled(TinyText)`
  font-style: italic;
`;

const Watermark = styled.div<{ $x: number }>`
  position: absolute;
  left: ${(p) => p.$x}px;
  top: 580px;
  display: grid;
  grid-template-columns: 52px auto;
  width: 336px;
  color: rgba(250, 250, 250, 0.65);
  font-family: ${narrow};
  font-weight: 700;
  white-space: nowrap;
  pointer-events: none;
  text-shadow: 1px 1px 1px rgba(0, 0, 0, 0.3);

  svg {
    grid-row: 1 / 3;
    filter: drop-shadow(1px 1px 1px rgba(0, 0, 0, 0.4));
  }
`;
const MarkLines = styled.div`
  font-family: "Liberation Sans", sans-serif;
`;
const MarkText = styled.div<{ $indent?: boolean }>`
  padding-left: ${(p) => (p.$indent ? 8 : 0)}px;
  font-size: 24px;
  line-height: 21px;
`;
const MarkProduct = styled.div`
  grid-column: 1 / 3;
  margin: -8px 0 0 26px;
  font-size: 25px;
  line-height: 28px;
  align-self: start;

  small {
    font-size: 14px;
    vertical-align: 6px;
    line-height: 1;
  }
`;
const Activate = styled.div`
  display: flex;
  flex-direction: column;
  color: rgba(130, 130, 130, 0.6);

  strong {
    font-size: 19px;
    line-height: 24px;
    font-weight: 400;
  }
  span {
    font-size: 14px;
    line-height: 18px;
  }
`;

const TaskRow = styled.footer`
  display: flex;
  flex: none;
  height: 38px;
  background: linear-gradient(90deg, #080808 0 50%, #222120 62%);
`;
const StartButton = styled.button`
  width: 48px;
  background: #1b1c1b;
`;
const Cortana = styled.div`
  display: flex;
  align-items: center;
  gap: 9px;
  flex: 0 1 344px;
  padding-left: 9px;
  background: #333;

  input {
    flex: 1;
    font-size: 14px;
  }
  input::placeholder {
    color: #a0a0a0;
  }
`;
const AppButton = styled.button<{ $open?: boolean; $active?: boolean }>`
  flex: none;
  width: 49px;
  background: ${(p) => (p.$active ? "#3c3c3c" : "none")};
  background-image: ${(p) => (p.$open ? "linear-gradient(#ffaab5, #ffaab5)" : "none")};
  background-repeat: no-repeat;
  background-position: bottom;
  background-size: ${(p) => (p.$active ? "100%" : "40px")} 2px;
`;
const Tray = styled.div`
  display: flex;
  align-items: center;
  gap: 9px;
  margin-left: auto;
  color: #fff;
`;
const TrayText = styled.div<{ $wide?: boolean }>`
  display: flex;
  flex-direction: column;
  width: ${(p) => (p.$wide ? 60 : 26)}px;
  ${(p) => p.$wide && "align-items: center;"}
  white-space: nowrap;
`;
const ShowDesktop = styled.button`
  width: 5px;
  margin-left: 6px;
  border-left: 1px solid #666;
`;
